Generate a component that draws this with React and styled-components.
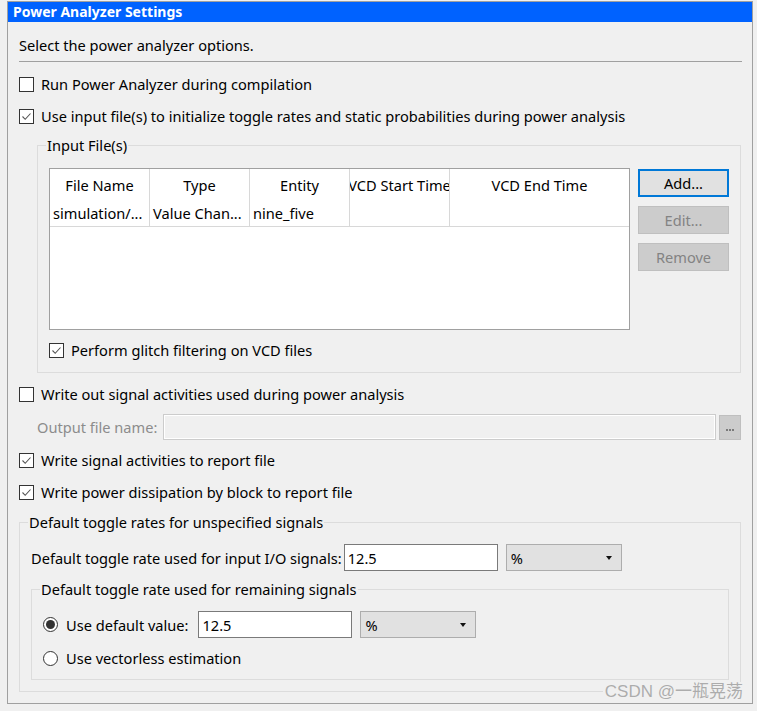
import React from 'react'
import styled, {createGlobalStyle} from 'styled-components'


const GlobalStyle = createGlobalStyle`
  html, body {
    margin: 0;
    padding: 0;
    background: #f0f0f0;
  }
  body {
    font-family: 'Noto Sans', 'Open Sans', sans-serif;
    font-size: 14.6px;
    color: #000;
  }
`

const Page = styled.div`
  width: 757px;
  height: 711px;
  padding: 1px 0 0 7px;
  box-sizing: border-box;
`

const Panel = styled.div`
  position: relative;
  width: 746px;
  height: 703px;
  box-sizing: border-box;
  border: 1px solid #a0a0a0;
  display: flex;
  flex-direction: column;
`

const TitleBar = styled.div`
  height: 20px;
  line-height: 20px;
  padding-left: 5px;
  background: #0062ff;
  color: #fff;
  font-weight: bold;
  font-size: 14px;
`

const Content = styled.div`
  padding: 13px 10px 0 11px;
  display: flex;
  flex-direction: column;
`

const Intro = styled.div`
  line-height: 20px;
`

const Separator = styled.div`
  height: 1px;
  margin-top: 6px;
  background: #a0a0a0;
`

const Row = styled.label`
  display: flex;
  align-items: center;
  height: 20px;
  margin-top: ${p => p.$top || 0}px;
  margin-left: ${p => p.$left || 0}px;
  gap: ${p => p.$gap || 7}px;
  white-space: nowrap;
`

const Box = styled.span`
  width: 13px;
  height: 13px;
  border: 1px solid #333;
  background: #fff;
  flex: none;
  display: flex;
  align-items: center;
  justify-content: center;
`

const Check = ({checked}) => (
  <Box>
    {checked && (
      <svg width='11' height='11' viewBox='0 0 11 11'>
        <polyline points='1.5,5.5 4.2,8.3 9.5,2.5' fill='none' stroke='#555' strokeWidth='1.1' />
      </svg>
    )}
  </Box>
)

const RadioCircle = styled.span`
  width: 13px;
  height: 13px;
  border: 1px solid #333;
  border-radius: 50%;
  background: #fff;
  flex: none;
  display: flex;
  align-items: center;
  justify-content: center;
  &::after {
    content: '';
    display: ${p => (p.$on ? 'block' : 'none')};
    width: 9px;
    height: 9px;
    border-radius: 50%;
    background: #333;
  }
`

const Group = styled.div`
  position: relative;
  border: 1px solid #dcdcdc;
  margin: ${p => p.$margin};
  padding: ${p => p.$padding};
`

const GroupTitle = styled.span`
  position: absolute;
  top: -11px;
  left: ${p => p.$left}px;
  line-height: 20px;
  padding: 0 1px;
  background: #f0f0f0;
`

const FilesArea = styled.div`
  display: flex;
  gap: 8px;
`

const Table = styled.div`
  width: 581px;
  height: 162px;
  box-sizing: border-box;
  border: 1px solid #a0a0a0;
  background: #fff;
  flex: none;
`

const TableRow = styled.div`
  display: grid;
  grid-template-columns: 100px 100px 100px 100px 1fr;
  height: ${p => p.$height}px;
  border-bottom: ${p => (p.$last ? '1px solid #d8d8d8' : 'none')};
`

// header text is centred and clipped on both sides when it is too wide
const Cell = styled.div`
  display: flex;
  align-items: center;
  justify-content: ${p => (p.$head ? 'center' : 'flex-start')};
  padding-left: ${p => (p.$head ? 0 : 3)}px;
  overflow: hidden;
  white-space: nowrap;
  border-right: ${p => (p.$end ? 'none' : '1px solid #d8d8d8')};
`

const ButtonColumn = styled.div`
  display: flex;
  flex-direction: column;
  gap: 9px;
  padding-top: 1px;
`

const Button = styled.button`
  width: 91px;
  height: 28px;
  box-sizing: border-box;
  font: inherit;
  padding: 0;
  background: ${p => (p.disabled ? '#cccccc' : '#e1e1e1')};
  color: ${p => (p.disabled ? '#838383' : '#000')};
  border: ${p => (p.$focus ? '2px solid #0078d7' : '1px solid #bfbfbf')};
`

const OutputRow = styled.div`
  display: flex;
  align-items: center;
  margin-top: 10px;
  margin-left: 18px;
`

const MutedLabel = styled.span`
  color: #8c8c8c;
  width: 126px;
  white-space: nowrap;
`

const DisabledInput = styled.div`
  width: 553px;
  height: 26px;
  box-sizing: border-box;
  border: 1px solid #cccccc;
  box-shadow: inset 0 0 0 1px #fff;
  background: #f0f0f0;
`

const DotsButton = styled.div`
  width: 22px;
  height: 25px;
  margin-left: 3px;
  box-sizing: border-box;
  background: #cccccc;
  border: 1px solid #bfbfbf;
  display: flex;
  align-items: flex-end;
  justify-content: center;
  gap: 1px;
  padding-bottom: 8px;
`

const Dot = styled.span`
  width: 2px;
  height: 2px;
  background: #7a7a7a;
`

const FieldRow = styled.div`
  display: flex;
  align-items: center;
  white-space: nowrap;
`

const TextInput = styled.div`
  width: 154px;
  height: 27px;
  box-sizing: border-box;
  border: 1px solid #7a7a7a;
  background: #fff;
  padding-left: 3px;
  display: flex;
  align-items: center;
  margin-left: ${p => p.$left}px;
`

const Select = styled.div`
  width: 116px;
  height: 27px;
  box-sizing: border-box;
  border: 1px solid #adadad;
  background: #e1e1e1;
  margin-left: 8px;
  padding: 0 9px 0 4px;
  display: flex;
  align-items: center;
  justify-content: space-between;
  &::after {
    content: '';
    border-left: 3.5px solid transparent;
    border-right: 3.5px solid transparent;
    border-top: 4px solid #111;
  }
`

const Watermark = styled.div`
  position: absolute;
  right: 9px;
  bottom: 1px;
  font-family: 'Liberation Sans', 'Noto Sans CJK SC', sans-serif;
  font-size: 17px;
  color: rgba(150, 150, 150, 0.75);
  background: #f0f0f0;
  padding-left: 2px;
  line-height: 20px;
`

const columns = ['File Name', 'Type', 'Entity', 'VCD Start Time', 'VCD End Time']
const fileRow = ['simulation/...', 'Value Chan...', 'nine_five', '', '']

export default function App() {
  return (
    <Page>
      <GlobalStyle />
      <Panel>
        <TitleBar>Power Analyzer Settings</TitleBar>
        <Content>
          <Intro>Select the power analyzer options.</Intro>
          <Separator />
          <Row $top={12}><Check />Run Power Analyzer during compilation</Row>
          <Row $top={12}>
            <Check checked />
            Use input file(s) to initialize toggle rates and static probabilities during power analysis
          </Row>

          <Group $margin='19px 1px 0 18px' $padding='22px 12px 12px 11px'>
            <GroupTitle $left={8}>Input File(s)</GroupTitle>
            <FilesArea>
              <Table>
                <TableRow $height={31}>
                  {columns.map((c, i) => <Cell key={c} $head $end={i === 4}>{c}</Cell>)}
                </TableRow>
                <TableRow $height={26} $last>
                  {fileRow.map((c, i) => <Cell key={i} $end={i === 4}>{c}</Cell>)}
                </TableRow>
              </Table>
              <ButtonColumn>
                <Button $focus>Add...</Button>
                <Button disabled>Edit...</Button>
                <Button disabled>Remove</Button>
              </ButtonColumn>
            </FilesArea>
            <Row $top={10}><Check checked />Perform glitch filtering on VCD files</Row>
          </Group>

          <Row $top={11}><Check />Write out signal activities used during power analysis</Row>
          <OutputRow>
            <MutedLabel>Output file name:</MutedLabel>
            <DisabledInput />
            <DotsButton><Dot /><Dot /><Dot /></DotsButton>
          </OutputRow>
          <Row $top={10}><Check checked />Write signal activities to report file</Row>
          <Row $top={12}><Check checked />Write power dissipation by block to report file</Row>

          <Group $margin='20px 1px 0 0' $padding='21px 11px 11px 11px'>
            <GroupTitle $left={8}>Default toggle rates for unspecified signals</GroupTitle>
            <FieldRow>
              Default toggle rate used for input I/O signals:
              <TextInput $left={2}>12.5</TextInput>
              <Select>%</Select>
            </FieldRow>
            <Group $margin='18px 0 0 0' $padding='21px 0 11px 11px'>
              <GroupTitle $left={8}>Default toggle rate used for remaining signals</GroupTitle>
              <FieldRow>
                <Row $gap={8}><RadioCircle $on />Use default value:</Row>
                <TextInput $left={10}>12.5</TextInput>
                <Select>%</Select>
              </FieldRow>
              <Row $top={10} $gap={8}><RadioCircle />Use vectorless estimation</Row>
            </Group>
          </Group>
        </Content>
        <Watermark>CSDN @一瓶晃荡</Watermark>
      </Panel>
    </Page>
  )
}
